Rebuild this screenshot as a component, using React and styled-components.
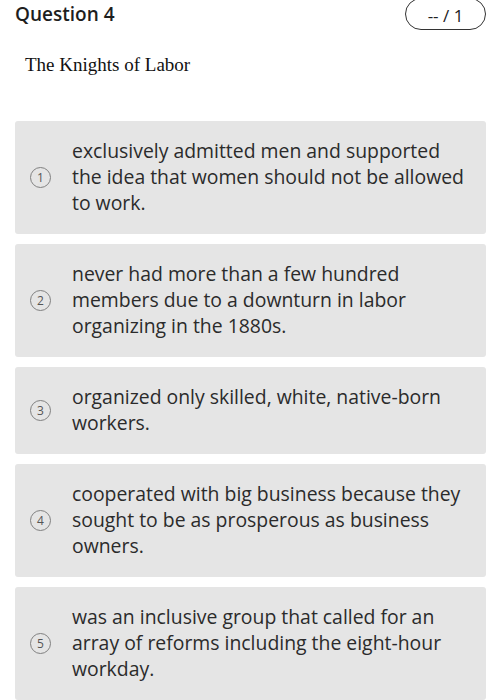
import React from 'react'
import styled, { createGlobalStyle } from 'styled-components'

const Global = createGlobalStyle`
  body {
    margin: 0;
    background: #fff;
    font-family: "Open Sans", "Liberation Sans", sans-serif;
  }
`

const Page = styled.div`
  width: 494px;
  height: 700px;
  overflow: hidden;
  padding: 0 6px 0 15px;
  box-sizing: border-box;
`

const Header = styled.div`
  display: flex;
  justify-content: space-between;
  align-items: flex-start;
  height: 38px;
`

const Title = styled.h2`
  margin: 0;
  padding-top: 1px;
  font-size: 19px;
  font-weight: 600;
  color: #1e1e1e;
  line-height: 26px;
`

const Score = styled.div`
  margin-top: -2px;
  margin-right: 2px;
  width: 81px;
  height: 32px;
  border: 1.5px solid #333;
  border-radius: 16px;
  box-sizing: border-box;
  display: flex;
  align-items: center;
  justify-content: center;
  font-size: 17px;
  color: #222;
  padding-top: 2px;
`

const Prompt = styled.p`
  margin: 14px 0 0 10px;
  font-family: "Liberation Serif", "Times New Roman", serif;
  font-size: 19px;
  color: #111;
  line-height: 26px;
`

const List = styled.div`
  margin-top: 43px;
  display: flex;
  flex-direction: column;
  gap: 10px;
  padding-right: 2px;
`

const Choice = styled.div`
  display: flex;
  align-items: center;
  gap: 21px;
  background: #e5e5e5;
  border-radius: 3px;
  padding: 17px 17px 18px 15px;
`

const Num = styled.span`
  flex: none;
  width: 21px;
  height: 21px;
  border: 1.3px solid #808080;
  border-radius: 50%;
  box-sizing: border-box;
  display: flex;
  align-items: center;
  justify-content: center;
  font-size: 12px;
  color: #555;
`

const Text = styled.span`
  font-size: 19.4px;
  line-height: 26px;
  color: #2b2b2b;
`

const choices = [
  'exclusively admitted men and supported the idea that women should not be allowed to work.',
  'never had more than a few hundred members due to a downturn in labor organizing in the 1880s.',
  'organized only skilled, white, native-born workers.',
  'cooperated with big business because they sought to be as prosperous as business owners.',
  'was an inclusive group that called for an array of reforms including the eight-hour workday.',
]

export default function App() {
  return (
    <>
      <Global />
      <Page>
        <Header>
          <Title>Question 4</Title>
          <Score>-- / 1</Score>
        </Header>
        <Prompt>The Knights of Labor</Prompt>
        <List>
          {choices.map((c, i) => (
            <Choice key={i}>
              <Num>{i + 1}</Num>
              <Text>{c}</Text>
            </Choice>
          ))}
        </List>
      </Page>
    </>
  )
}
